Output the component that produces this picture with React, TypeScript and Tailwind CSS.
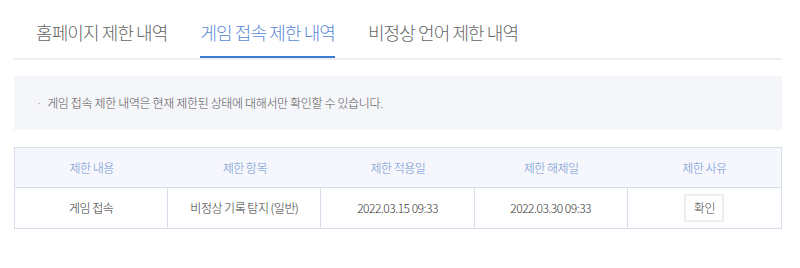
import React from "react";

const font = { fontFamily: '"Noto Sans CJK KR", "Noto Sans", sans-serif' };

export default function App() {
  const tabs = ["홈페이지 제한 내역", "게임 접속 제한 내역", "비정상 언어 제한 내역"];
  const headers = ["제한 내용", "제한 항목", "제한 적용일", "제한 해제일", "제한 사유"];
  const row = ["게임 접속", "비정상 기록 탐지 (일반)", "2022.03.15 09:33", "2022.03.30 09:33"];
  return (
    <div className="w-[800px] h-[268px] bg-white font-light" style={font}>
      <div className="pl-[14px] w-[782px]">
        <div className="flex gap-[33px] pl-[22px] pt-[13px] border-b-2 border-[#efefef]">
          {tabs.map((t, i) => (
            <div
              key={t}
              className={
                "h-[45px] flex items-start text-[18px] leading-[38px] tracking-[-0.9px] border-b-2 " +
                (i === 1 ? "border-[#3f7bd1] text-[#5b89d6]" : "border-transparent text-[#666666]")
              }
            >
              {t}
            </div>
          ))}
        </div>
        <div className="mt-[16px] h-[54px] bg-[#f5f6fa] flex items-center pl-[22px] text-[12px] text-[#555555] tracking-[-0.35px]">
          <span className="text-[#999999] mr-[5px]">·</span>
          게임 접속 제한 내역은 현재 제한된 상태에 대해서만 확인할 수 있습니다.
        </div>
        <div className="mt-[17px] border border-[#d6deec] text-[12px] tracking-[-0.5px]">
          <div className="grid grid-cols-5 h-[40px] bg-[#f5f7fc] border-b border-[#d6deec] text-[#6d92d2]">
            {headers.map((h) => (
              <div key={h} className="flex items-center justify-center">
                {h}
              </div>
            ))}
          </div>
          <div className="grid grid-cols-5 h-[40px] text-[#333333]">
            {row.map((c) => (
              <div key={c} className="flex items-center justify-center border-r border-[#d6deec]">
                {c}
              </div>
            ))}
            <div className="flex items-center justify-center">
              <span className="w-[40px] h-[28px] flex items-center justify-center border-2 border-[#eeeeee] text-[#444444] text-[12px]">
                확인
              </span>
            </div>
          </div>
        </div>
      </div>
    </div>
  );
}
